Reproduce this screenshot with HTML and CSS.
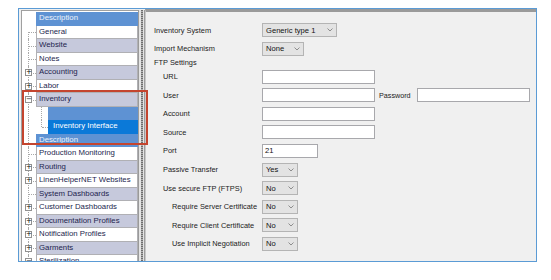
FILE: index.html
```html
<!DOCTYPE html>
<html>
<head>
<meta charset="utf-8">
<link rel="stylesheet" href="styles.css">
</head>
<body>
<div class="window">
  <div class="tree">
    <div class="row hdr"><div class="gut none"></div><div class="cell">Description</div></div>
    <div class="row"><div class="gut first"></div><div class="cell w">General</div></div>
    <div class="row"><div class="gut"></div><div class="cell g">Website</div></div>
    <div class="row"><div class="gut"></div><div class="cell w">Notes</div></div>
    <div class="row"><div class="gut"><span class="exp">+</span></div><div class="cell g">Accounting</div></div>
    <div class="row"><div class="gut"><span class="exp">+</span></div><div class="cell w">Labor</div></div>
    <div class="row"><div class="gut"><span class="exp">−</span></div><div class="cell g">Inventory</div></div>
    <div class="row"><div class="gut child mid"></div><div class="cell blank"></div></div>
    <div class="row"><div class="gut child last"></div><div class="cell sel">Inventory Interface</div></div>
    <div class="row hdr"><div class="gut vonly"></div><div class="cell">Description</div></div>
    <div class="row"><div class="gut"></div><div class="cell w">Production Monitoring</div></div>
    <div class="row"><div class="gut"><span class="exp">+</span></div><div class="cell g">Routing</div></div>
    <div class="row"><div class="gut"><span class="exp">+</span></div><div class="cell w">LinenHelperNET Websites</div></div>
    <div class="row"><div class="gut"></div><div class="cell g">System Dashboards</div></div>
    <div class="row"><div class="gut"><span class="exp">+</span></div><div class="cell w">Customer Dashboards</div></div>
    <div class="row"><div class="gut"><span class="exp">+</span></div><div class="cell g">Documentation Profiles</div></div>
    <div class="row"><div class="gut"><span class="exp">+</span></div><div class="cell w">Notification Profiles</div></div>
    <div class="row"><div class="gut"><span class="exp">+</span></div><div class="cell g">Garments</div></div>
    <div class="row"><div class="gut"><span class="exp">−</span></div><div class="cell w">Sterilization</div></div>
  </div>
  <div class="splitter"><div class="grip"></div></div>
  <div class="panel">
    <div class="frow"><div class="lbl">Inventory System</div><div class="sel-box s-generic"><span>Generic type 1</span><svg class="chev" width="6" height="4" viewBox="0 0 6 4"><polyline points="0.5,0.5 3,3 5.5,0.5" fill="none" stroke="#777" stroke-width="0.8"/></svg></div></div>
    <div class="frow"><div class="lbl">Import Mechanism</div><div class="sel-box s-none"><span>None</span><svg class="chev" width="6" height="4" viewBox="0 0 6 4"><polyline points="0.5,0.5 3,3 5.5,0.5" fill="none" stroke="#777" stroke-width="0.8"/></svg></div></div>
    <div class="frow ftp"><div class="lbl">FTP Settings</div></div>
    <div class="frow"><div class="lbl i1">URL</div><div class="inp w113"></div></div>
    <div class="frow"><div class="lbl i1">User</div><div class="inp w113"></div><div class="pw">Password</div><div class="inp w113"></div></div>
    <div class="frow"><div class="lbl i1">Account</div><div class="inp w113"></div></div>
    <div class="frow"><div class="lbl i1">Source</div><div class="inp w113"></div></div>
    <div class="frow"><div class="lbl i1">Port</div><div class="inp w56">21</div></div>
    <div class="frow"><div class="lbl i1">Passive Transfer</div><div class="sel-box s-yn"><span>Yes</span><svg class="chev" width="6" height="4" viewBox="0 0 6 4"><polyline points="0.5,0.5 3,3 5.5,0.5" fill="none" stroke="#777" stroke-width="0.8"/></svg></div></div>
    <div class="frow"><div class="lbl i1">Use secure FTP (FTPS)</div><div class="sel-box s-yn"><span>No</span><svg class="chev" width="6" height="4" viewBox="0 0 6 4"><polyline points="0.5,0.5 3,3 5.5,0.5" fill="none" stroke="#777" stroke-width="0.8"/></svg></div></div>
    <div class="frow"><div class="lbl i2">Require Server Certificate</div><div class="sel-box s-yn"><span>No</span><svg class="chev" width="6" height="4" viewBox="0 0 6 4"><polyline points="0.5,0.5 3,3 5.5,0.5" fill="none" stroke="#777" stroke-width="0.8"/></svg></div></div>
    <div class="frow"><div class="lbl i2">Require Client Certificate</div><div class="sel-box s-yn"><span>No</span><svg class="chev" width="6" height="4" viewBox="0 0 6 4"><polyline points="0.5,0.5 3,3 5.5,0.5" fill="none" stroke="#777" stroke-width="0.8"/></svg></div></div>
    <div class="frow"><div class="lbl i2">Use Implicit Negotiation</div><div class="sel-box s-yn"><span>No</span><svg class="chev" width="6" height="4" viewBox="0 0 6 4"><polyline points="0.5,0.5 3,3 5.5,0.5" fill="none" stroke="#777" stroke-width="0.8"/></svg></div></div>
  </div>
  <div class="highlight"></div>
</div>
</body>
</html>
```

FILE: styles.css
```css
* { box-sizing: border-box; }
html, body { margin: 0; padding: 0; background: #ffffff; }
body { font-family: "Liberation Sans", Arial, sans-serif; }

.window {
  position: relative;
  margin: 8px 0 0 18px;
  width: 519px;
  height: 254px;
  border: 1px solid #5b9bd5;
  background: #f0f0f0;
  display: flex;
  align-items: stretch;
  overflow: hidden;
}

/* ---------- tree ---------- */
.tree {
  width: 117px;
  margin: 1px 0 0 2px;
  background: #ffffff;
  border-left: 1px solid #a0a0a0;
  border-top: 1px solid #a0a0a0;
  padding-top: 1px;
  overflow: hidden;
  font-size: 7.8px;
}
.row { display: flex; height: 13.5px; }
.gut { position: relative; width: 14px; flex: none; }
.gut::before {
  content: "";
  position: absolute;
  left: 6px; top: 0; bottom: 0;
  border-left: 1px dotted #a8a8a8;
}
.gut::after {
  content: "";
  position: absolute;
  left: 7px; top: 50%;
  width: 7px;
  border-top: 1px dotted #a8a8a8;
}
.gut.none::before, .gut.none::after { display: none; }
.gut.first::before { top: 50%; }
.gut.vonly::after { display: none; }

.gut.child {
  width: 26px;
  background-image: repeating-linear-gradient(#a8a8a8 0 1px, transparent 1px 2px);
  background-repeat: no-repeat;
  background-position: 19px 0;
  background-size: 1px 100%;
}
.gut.child.mid::after { display: none; }
.gut.child.last { background-size: 1px 55%; }
.gut.child.last::after { left: 20px; width: 6px; top: 55%; }

.exp {
  position: absolute;
  left: 3px; top: 3px;
  width: 7px; height: 7px;
  border: 1px solid #919191;
  background: #ffffff;
  z-index: 1;
  font-size: 7px;
  line-height: 5px;
  text-align: center;
  color: #000;
  font-family: "DejaVu Sans", sans-serif;
}

.cell {
  flex: 1;
  border: 1px solid #b0b0b4;
  border-top: none;
  padding-left: 2px;
  line-height: 12.5px;
  color: #231f4e;
  white-space: nowrap;
  overflow: hidden;
}
.cell.w { background: #ffffff; }
.cell.g { background: #c6c9dc; }
.hdr .cell { background: #5e92d3; color: #eef3fb; border-color: #5e92d3; }
.cell.blank { background: #5e92d3; border-color: #5e92d3; }
.cell.sel { background: #0b79d8; color: #ffffff; border-color: #0b79d8; padding-left: 4px; }

/* ---------- splitter ---------- */
.splitter {
  width: 7px;
  flex: none;
  margin-top: 1px;
  background: #e4e4e4;
  border-left: 1px solid #9a9a9a;
  border-right: 1px solid #9c9c9c;
  display: flex;
  justify-content: center;
}
.grip {
  width: 2px;
  background-image: linear-gradient(#6e6e6e 50%, #b0b0b0 50%);
  background-size: 2px 2px;
}

/* ---------- panel ---------- */
.panel {
  flex: 1;
  border-top: 3px solid #9a9a9a;
  border-left: 1px solid #c8c8c8;
  background: #f0f0f0;
  padding: 11px 0 0 8px;
  display: flex;
  flex-direction: column;
  gap: 4.6px;
  font-size: 7.4px;
  color: #1b1b1b;
}
.frow { display: flex; align-items: center; height: 14px; flex: none; }
.frow.ftp { height: 4.8px; }
.lbl { width: 108px; flex: none; white-space: nowrap; }
.lbl.i1 { padding-left: 9px; }
.lbl.i2 { padding-left: 18px; }

.sel-box {
  height: 14px;
  background: #e3e3e3;
  border: 1px solid #b4b4b4;
  display: flex;
  align-items: center;
  justify-content: space-between;
  padding: 0 3px;
  font-size: 7.6px;
  color: #111;
}
.s-generic { width: 75px; }
.s-none { width: 42px; }
.s-yn { width: 36px; }
.chev { flex: none; }

.inp {
  height: 14px;
  background: #ffffff;
  border: 1px solid #a8a8ac;
  font-size: 7.6px;
  line-height: 12px;
  padding-left: 2px;
  color: #111;
}
.w113 { width: 113px; }
.w56 { width: 56px; }
.pw { margin-left: 4px; width: 38px; flex: none; font-size: 7.2px; }

/* ---------- highlight box ---------- */
.highlight {
  position: absolute;
  left: 3px;
  top: 81px;
  width: 126px;
  height: 55px;
  border: 2.5px solid #c4452f;
  pointer-events: none;
}
```
